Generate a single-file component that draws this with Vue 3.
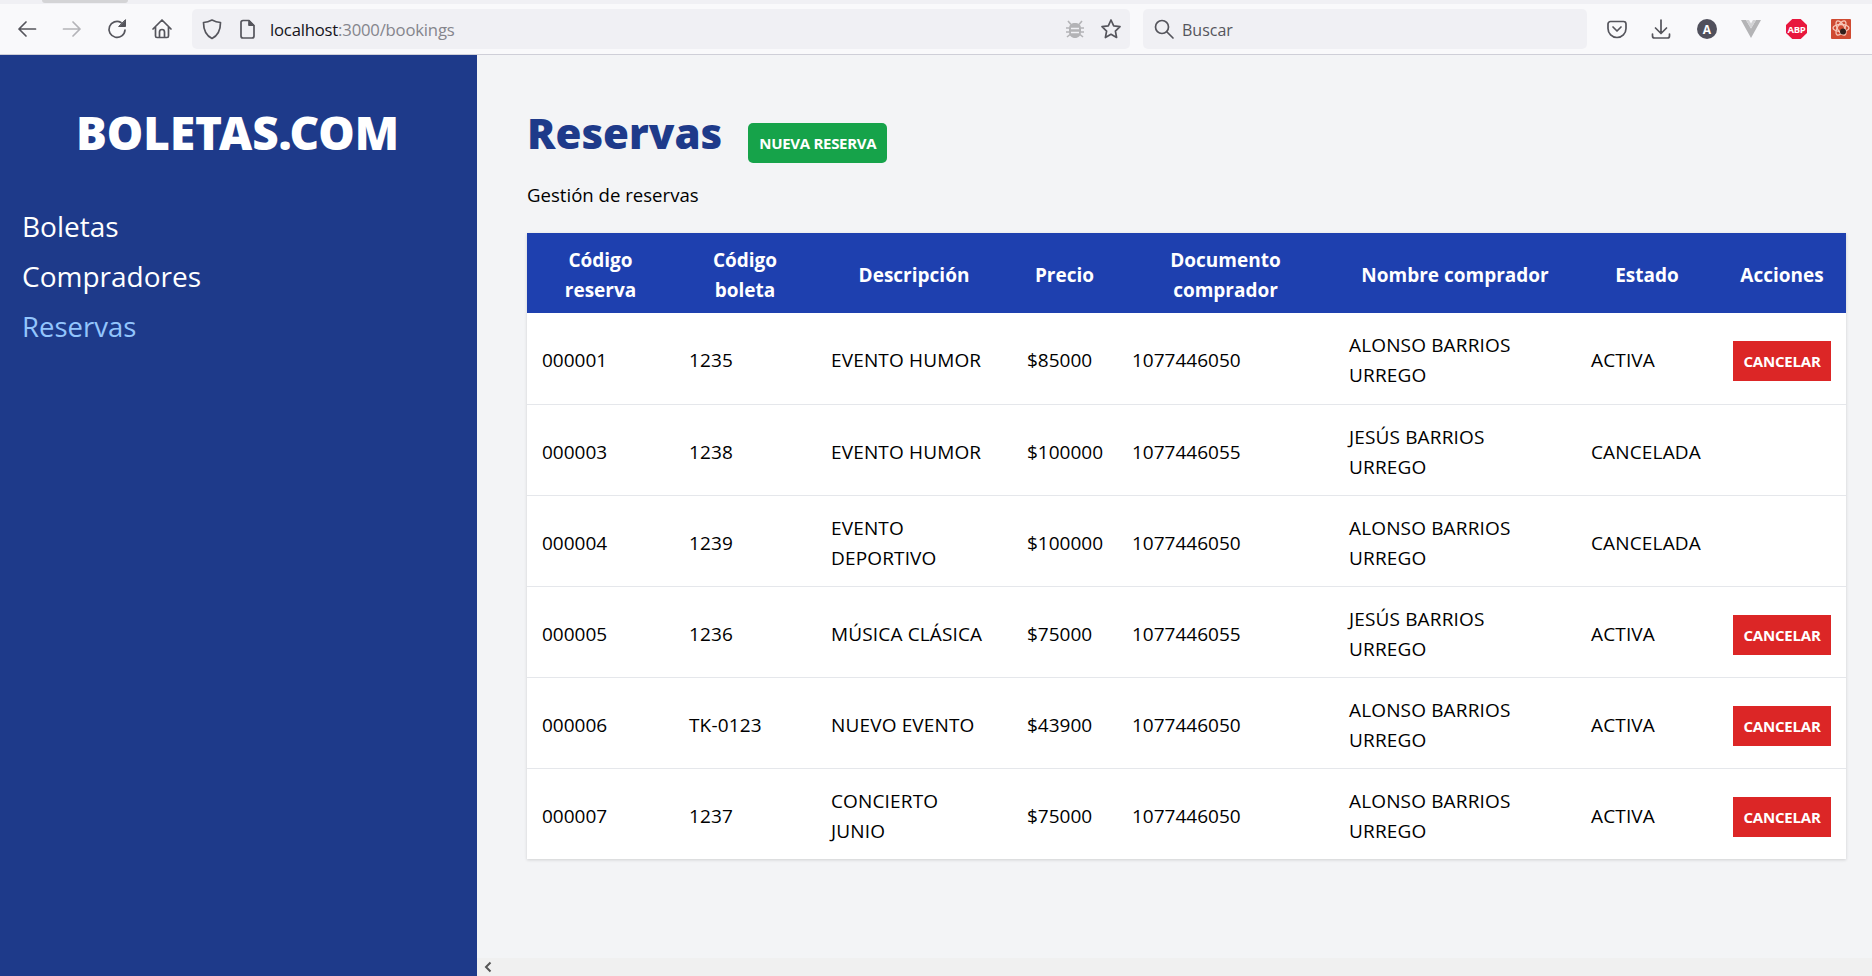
<script setup>
const rows = [
  { id: '000001', code: '1235', desc: 'EVENTO HUMOR', price: '$85000', doc: '1077446050', name: 'ALONSO BARRIOS URREGO', state: 'ACTIVA' },
  { id: '000003', code: '1238', desc: 'EVENTO HUMOR', price: '$100000', doc: '1077446055', name: 'JESÚS BARRIOS URREGO', state: 'CANCELADA' },
  { id: '000004', code: '1239', desc: 'EVENTO DEPORTIVO', price: '$100000', doc: '1077446050', name: 'ALONSO BARRIOS URREGO', state: 'CANCELADA' },
  { id: '000005', code: '1236', desc: 'MÚSICA CLÁSICA', price: '$75000', doc: '1077446055', name: 'JESÚS BARRIOS URREGO', state: 'ACTIVA' },
  { id: '000006', code: 'TK-0123', desc: 'NUEVO EVENTO', price: '$43900', doc: '1077446050', name: 'ALONSO BARRIOS URREGO', state: 'ACTIVA' },
  { id: '000007', code: '1237', desc: 'CONCIERTO JUNIO', price: '$75000', doc: '1077446050', name: 'ALONSO BARRIOS URREGO', state: 'ACTIVA' },
]
</script>

<template>
  <div class="window">
    <div class="tabstrip"><span class="tabshadow"></span></div>
    <header class="toolbar">
      <div class="navicons">
        <svg width="24" height="24" viewBox="0 0 24 24" class="ic"><path d="M20.500 12H4M11 5l-7 7 7 7" /></svg>
        <svg width="24" height="24" viewBox="0 0 24 24" class="ic faded"><path d="M3.500 12H20M13 5l7 7-7 7" /></svg>
        <svg width="24" height="24" viewBox="0 0 24 24" class="ic"><path d="M20 13a8 8 0 1 1-4-7.500" /><path d="M20.500 3v6.500H14z" class="solid" /></svg>
        <svg width="24" height="24" viewBox="0 0 24 24" class="ic"><path d="M3 12l9-9 9 9M5.500 10v9a1.500 1.500 0 0 0 1.500 1.500h10a1.500 1.500 0 0 0 1.500-1.500v-9M9.500 20.500V15a2.500 2.500 0 0 1 5 0v5.500" /></svg>
      </div>
      <div class="urlbar">
        <svg width="22" height="24" viewBox="0 0 22 24" class="ic"><path d="M11 3c3 1.600 5.500 2.300 8.500 2.500 0 8-2.500 13-8.500 16C5 18.500 2.500 13.500 2.500 5.500 5.500 5.300 8 4.600 11 3z" /></svg>
        <svg width="18" height="22" viewBox="0 0 18 22" class="ic page"><path d="M5 2.500h6l5 5V18a2 2 0 0 1-2 2H5a2 2 0 0 1-2-2V4.500a2 2 0 0 1 2-2z" /><path d="M11 2.500l5 5h-5z" class="solid" /></svg>
        <span class="url"><span class="host">localhost</span>:3000/bookings</span>
        <svg width="20" height="20" viewBox="0 0 20 20" class="bug">
          <path d="M3 2l3 3.500M17 2l-3 3.500" class="legs" />
          <path d="M1 9h3M16 9h3M1 13h3M16 13h3M2 18l3-2.500M18 18l-3-2.500" class="legs" />
          <path d="M10 4c3.500 0 6 2 6 5v4c0 3.500-2.500 6-6 6s-6-2.500-6-6V9c0-3 2.500-5 6-5z" />
          <path d="M6 9.500h8M6 13.500h8" class="bars" />
        </svg>
        <svg width="24" height="24" viewBox="0 0 24 24" class="ic star"><path d="M12 3l2.700 5.900 6.300.8-4.600 4.400 1.200 6.400-5.600-3.200-5.600 3.200 1.200-6.400L3 9.700l6.300-.8z" /></svg>
      </div>
      <div class="searchbar">
        <svg width="24" height="24" viewBox="0 0 24 24" class="ic"><circle cx="10" cy="10" r="6.500" /><path d="M15 15l6 6" /></svg>
        <span class="find">Buscar</span>
      </div>
      <div class="exts">
        <svg width="22" height="22" viewBox="0 0 22 22" class="ic"><path d="M4.500 3.500h13A2.500 2.500 0 0 1 20 6v4.500a9 9 0 0 1-18 0V6a2.500 2.500 0 0 1 2.500-2.500z" /><path d="M7 9l4 4 4-4" /></svg>
        <svg width="22" height="22" viewBox="0 0 22 22" class="ic"><path d="M11 2v13M5.500 10l5.500 5.500 5.500-5.500M2.500 16v2a2 2 0 0 0 2 2h13a2 2 0 0 0 2-2v-2" /></svg>
        <span class="avatar">A</span>
        <svg width="22" height="20" viewBox="0 0 22 20" class="vue"><path d="M1 1h5l5 8.500L16 1h5L11 19z" fill="#b4b4b6" /><path d="M6 1h3l2 3.500L13 1h3l-5 8.500z" fill="#d2d2d4" /></svg>
        <span class="abp">ABP</span>
        <svg width="20" height="20" viewBox="0 0 20 20" class="atom">
          <rect width="20" height="20" rx="1" fill="#cf4b32" />
          <g fill="none" stroke="#f6c7b8" stroke-width="1.300">
            <ellipse cx="10" cy="9" rx="8" ry="3.500" />
            <ellipse cx="10" cy="9" rx="8" ry="3.500" transform="rotate(60 10 9)" />
            <ellipse cx="10" cy="9" rx="8" ry="3.500" transform="rotate(120 10 9)" />
          </g>
          <circle cx="12" cy="12.500" r="3" fill="#30201c" />
        </svg>
      </div>
    </header>

    <div class="app">
      <aside class="sidebar">
        <h2 class="logo">BOLETAS.COM</h2>
        <nav class="menu">
          <a>Boletas</a>
          <a>Compradores</a>
          <a class="active">Reservas</a>
        </nav>
      </aside>

      <main class="content">
        <div class="heading">
          <h1>Reservas</h1>
          <button class="new">NUEVA RESERVA</button>
        </div>
        <p class="sub">Gestión de reservas</p>

        <table>
          <colgroup>
            <col class="c1" /><col class="c2" /><col class="c3" /><col class="c4" />
            <col class="c5" /><col class="c6" /><col class="c7" /><col class="c8" />
          </colgroup>
          <thead>
            <tr>
              <th>Código<br />reserva</th>
              <th>Código<br />boleta</th>
              <th>Descripción</th>
              <th>Precio</th>
              <th>Documento<br />comprador</th>
              <th>Nombre comprador</th>
              <th>Estado</th>
              <th>Acciones</th>
            </tr>
          </thead>
          <tbody>
            <tr v-for="r in rows" :key="r.id">
              <td class="num">{{ r.id }}</td>
              <td>{{ r.code }}</td>
              <td>{{ r.desc }}</td>
              <td class="num">{{ r.price }}</td>
              <td class="num">{{ r.doc }}</td>
              <td>{{ r.name }}</td>
              <td>{{ r.state }}</td>
              <td><button v-if="r.state === 'ACTIVA'" class="cancel">CANCELAR</button></td>
            </tr>
          </tbody>
        </table>
      </main>
    </div>
    <div class="hscroll">
      <svg width="10" height="12" viewBox="0 0 10 12"><path d="M7.500 1.500L3 6l4.500 4.500" fill="none" stroke="#555" stroke-width="2" /></svg>
    </div>
  </div>
</template>

<style>
html, body { margin: 0; overflow: hidden; }
</style>

<style scoped>
.window {
  width: 1872px;
  height: 976px;
  display: flex;
  flex-direction: column;
  position: relative;
  overflow: hidden;
  background: #f3f4f6;
  font-family: "Open Sans", "Noto Sans", sans-serif;
  color: #000;
}
.tabstrip { height: 4px; background: #f0f0f4; position: relative; }
.tabshadow {
  position: absolute; left: 42px; top: 0; width: 86px; height: 3px;
  background: #d4d4d6; border-radius: 0 0 8px 8px;
}
.toolbar {
  height: 51px;
  box-sizing: border-box;
  flex: none;
  display: flex;
  align-items: center;
  background: #f9f9fb;
  border-bottom: 1px solid #cfcfd8;
  padding: 0 0 0 15px;
}
.ic { fill: none; stroke: #55555c; stroke-width: 1.7; stroke-linejoin: round; stroke-linecap: round; flex: none; }
.solid { fill: #55555c; stroke-width: 1; }
.faded { stroke: #b4b4b8; }
.navicons { display: flex; gap: 21px; width: 177px; flex: none; }
.urlbar {
  width: 938px; height: 40px; flex: none;
  background: #f0f0f4; border-radius: 5px;
  display: flex; align-items: center;
  box-sizing: border-box; padding: 0 7px 0 9px;
}
.page { margin-left: 15px; }
.url { margin-left: 14px; flex: 1; font-size: 16.700px; color: #85858c; letter-spacing: -0.200px; }
.host { color: #15141a; }
.bug { fill: #b3b3b6; margin-right: 14px; flex: none; }
.legs { fill: none; stroke: #b3b3b6; stroke-width: 1.600; }
.bars { fill: none; stroke: #f0f0f4; stroke-width: 1.400; }
.searchbar {
  width: 444px; height: 40px; flex: none; margin-left: 13px;
  background: #f0f0f4; border-radius: 5px;
  display: flex; align-items: center; gap: 6px;
  box-sizing: border-box; padding: 0 9px;
  font-size: 16px; color: #55555c;
}
.find { margin-top: 2px; }
.exts {
  display: flex; align-items: center; margin-left: 19px;
  gap: 22px;
}
.avatar {
  width: 20px; height: 20px; border-radius: 50%; background: #50505c; color: #fff;
  font-size: 12px; font-weight: 700; display: flex; align-items: center; justify-content: center;
  margin-left: 3px;
}
.vue { margin-left: 1px; }
.abp {
  width: 21px; height: 20px; background: #e8173d; color: #fff;
  clip-path: polygon(30% 0, 70% 0, 100% 30%, 100% 70%, 70% 100%, 30% 100%, 0 70%, 0 30%);
  font-size: 9.500px; font-weight: 700; letter-spacing: -0.300px; display: flex; align-items: center; justify-content: center;
  margin-left: 2px;
}
.atom { margin-left: 2px; }
.app { flex: 1; display: flex; min-height: 0; }
.sidebar {
  width: 477px; flex: none; background: #1e3a8a; color: #fff;
  box-sizing: border-box; padding: 52px 24px 0 22px;
}
.logo {
  margin: 0; text-align: center; font-size: 45.800px; line-height: 50px;
  font-family: "Noto Sans", "Open Sans", sans-serif; font-weight: 900;
}
.menu { display: flex; flex-direction: column; margin-top: 44px; }
.menu a { font-size: 28px; line-height: 50px; }
.menu .active { color: #93c5fd; font-size: 27.500px; margin-top: 1px; }
.content {
  flex: 1; min-width: 0; box-sizing: border-box; padding: 53px 26px 0 50px;
}
.heading { display: flex; align-items: center; gap: 26px; height: 50px; }
h1 {
  margin: 0; font-size: 42px; line-height: 50px; color: #1e3a8a;
  font-family: "Noto Sans", "Open Sans", sans-serif; font-weight: 900;
}
.new {
  border: 0; background: #16a34a; color: #fff; border-radius: 5px;
  height: 40px; width: 139px; margin-top: 19px; padding: 0;
  font: 700 15px "Open Sans", sans-serif; letter-spacing: -0.300px;
}
.sub { margin: 0; padding-top: 22px; font-size: 18.600px; line-height: 30px; height: 75px; box-sizing: border-box; }
table {
  width: 1319px; table-layout: fixed; border-collapse: collapse; background: #fff;
  box-shadow: 0 1px 3px rgba(0,0,0,.15);
  font-size: 19px; line-height: 30px; letter-spacing: 0.150px;
}
.c1 { width: 147px; } .c2 { width: 142px; } .c3 { width: 196px; } .c4 { width: 105px; }
.c5 { width: 217px; } .c6 { width: 242px; } .c7 { width: 142px; } .c8 { width: 128px; }
th {
  background: #1e40af; color: #fff; height: 80px; padding: 4px 15px 0; font-size: 19px; font-weight: 700;
  box-sizing: border-box; text-align: center; letter-spacing: 0;
}
td { height: 91px; padding: 4px 15px 0; box-sizing: border-box; border-bottom: 1px solid #e5e7eb; vertical-align: middle; }
td.num { letter-spacing: 0; }
tr:last-child td { border-bottom: 0; }
.cancel {
  display: block;
  border: 0; background: #dc2626; color: #fff; height: 40px; width: 98px; padding: 0; margin-top: 2px;
  font: 700 15px "Open Sans", sans-serif; letter-spacing: -0.200px;
}
.hscroll {
  position: absolute; left: 477px; right: 0; bottom: 0; height: 18px;
  background: #f0f0f0; display: flex; align-items: center; padding-left: 6px;
}
</style>
